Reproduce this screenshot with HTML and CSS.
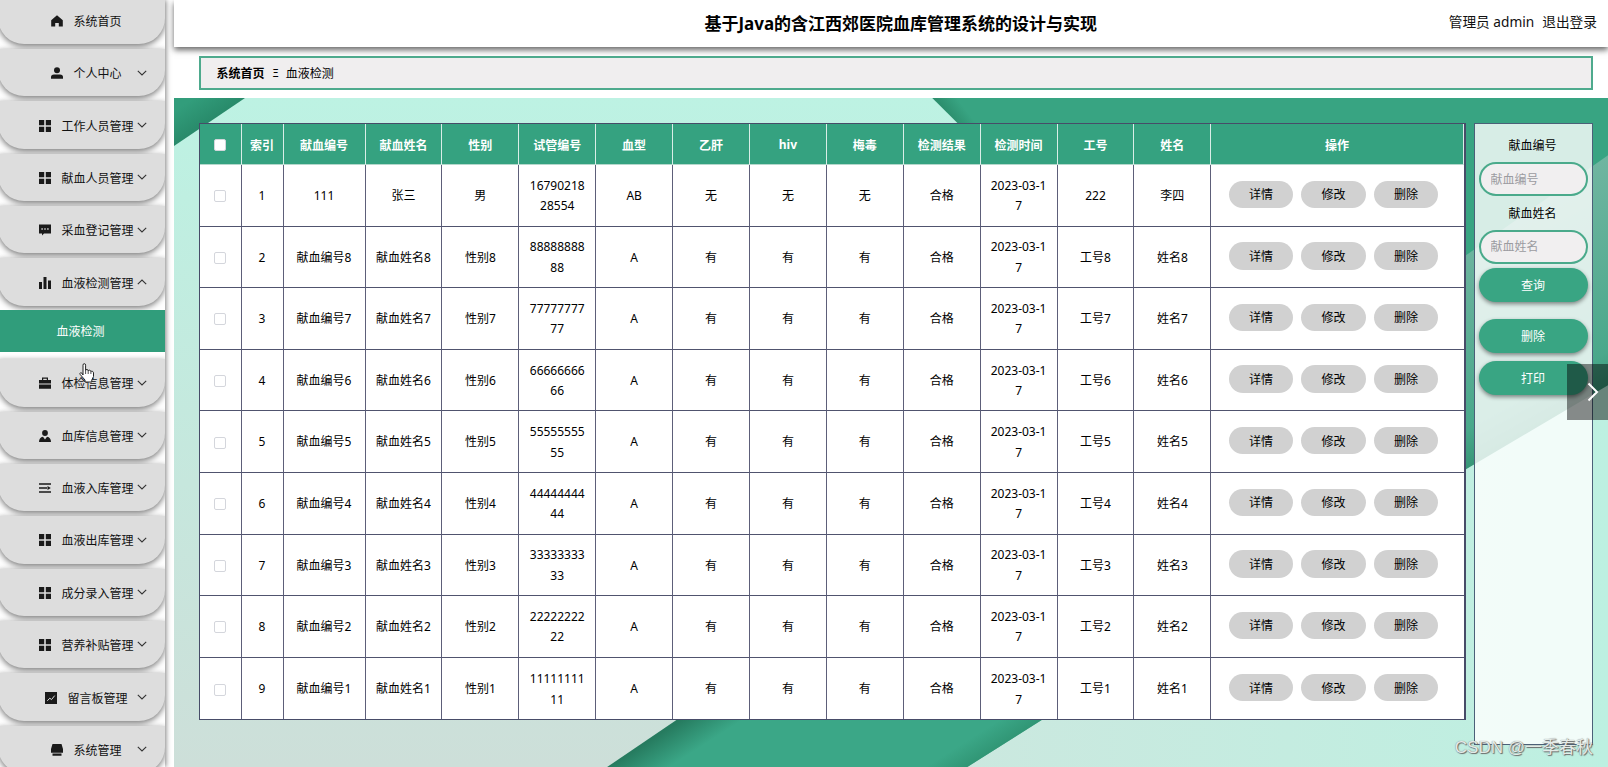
FILE: index.html
```
<!DOCTYPE html>
<html lang="zh-CN">
<head>
    <meta charset="UTF-8">
    <meta name="viewport" content="width=device-width, initial-scale=1.0">
    <title>基于Java的含江西郊医院血库管理系统的设计与实现</title>
    <link rel="stylesheet" href="styles.css">
</head>
<body>

<svg class="symbols" width="0" height="0">
    <symbol id="home" viewBox="0 0 12 12"><path d="M6 .3 11.8 5.200V11.500H7.800V8H4.200V11.500H.2V5.200Z"/></symbol>
    <symbol id="user" viewBox="0 0 12 12"><circle cx="6" cy="3.200" r="3"/><path d="M0 11.800V10Q0 7.400 3 7.400H9Q12 7.400 12 10V11.800Z"/></symbol>
    <symbol id="grid" viewBox="0 0 12 12"><path d="M0 0H5.200V5.200H0ZM6.800 0H12V5.200H6.800ZM0 6.800H5.200V12H0ZM6.800 6.800H12V12H6.800Z"/></symbol>
    <symbol id="chat" viewBox="0 0 12 12"><path fill-rule="evenodd" d="M0 .6H12V9.600H5L3 11.600V9.600H0ZM2.400 4.300V5.700H3.800V4.300ZM5.300 4.300V5.700H6.700V4.300ZM8.200 4.300V5.700H9.600V4.300Z"/></symbol>
    <symbol id="chart" viewBox="0 0 12 12"><path d="M0 5H3V12H0ZM4.500 0H7.500V12H4.500ZM9 3.500H12V12H9Z"/></symbol>
    <symbol id="case" viewBox="0 0 12 12"><path fill-rule="evenodd" d="M3 .5H9V3H12V6.500H0V3H3ZM4.200 1.700V3H7.800V1.700ZM0 7.400H12V11.800H0Z"/></symbol>
    <symbol id="staff" viewBox="0 0 12 12"><circle cx="6" cy="3" r="2.900"/><path d="M0 12Q0 7.500 4 6.800L6 9.500L8 6.800Q12 7.500 12 12Z"/></symbol>
    <symbol id="list" viewBox="0 0 12 12"><path d="M0 1.200H12V2.700H0ZM0 5.200H8V6.700H0ZM0 9.300H12V10.800H0ZM8.500 4 11.800 6 8.500 8Z"/></symbol>
    <symbol id="trend" viewBox="0 0 12 12"><path d="M0 0H12V12H0Z"/><path d="M2.300 8.800 4.800 6.200 6.500 7.600 9.700 3.600" fill="none" stroke="#ddd" stroke-width="1"/></symbol>
    <symbol id="screen" viewBox="0 0 12 12"><path d="M1.500 0H10.500L12 5V8.800H0V5ZM1.500 9.500H10.500V11.800H1.500Z"/></symbol>
    <symbol id="arrow" viewBox="0 0 10 6"><path d="M.8 .8 5 5 9.200 .8" fill="none" stroke="#333" stroke-width="1.100"/></symbol>
</svg>

<div class="app">
    <aside class="sidebar">
        <ul class="menu">
            <li class="menu-item"><svg class="icon"><use href="#home"/></svg><span>系统首页</span></li>
            <li class="menu-item"><svg class="icon"><use href="#user"/></svg><span>个人中心</span><svg class="arrow"><use href="#arrow"/></svg></li>
            <li class="menu-item"><svg class="icon"><use href="#grid"/></svg><span>工作人员管理</span><svg class="arrow"><use href="#arrow"/></svg></li>
            <li class="menu-item"><svg class="icon"><use href="#grid"/></svg><span>献血人员管理</span><svg class="arrow"><use href="#arrow"/></svg></li>
            <li class="menu-item"><svg class="icon"><use href="#chat"/></svg><span>采血登记管理</span><svg class="arrow"><use href="#arrow"/></svg></li>
            <li class="menu-item"><svg class="icon"><use href="#chart"/></svg><span>血液检测管理</span><svg class="arrow up"><use href="#arrow"/></svg></li>
            <li class="submenu-item">血液检测</li>
            <li class="menu-item"><svg class="icon"><use href="#case"/></svg><span>体检信息管理</span><svg class="arrow"><use href="#arrow"/></svg></li>
            <li class="menu-item"><svg class="icon"><use href="#staff"/></svg><span>血库信息管理</span><svg class="arrow"><use href="#arrow"/></svg></li>
            <li class="menu-item"><svg class="icon"><use href="#list"/></svg><span>血液入库管理</span><svg class="arrow"><use href="#arrow"/></svg></li>
            <li class="menu-item"><svg class="icon"><use href="#grid"/></svg><span>血液出库管理</span><svg class="arrow"><use href="#arrow"/></svg></li>
            <li class="menu-item"><svg class="icon"><use href="#grid"/></svg><span>成分录入管理</span><svg class="arrow"><use href="#arrow"/></svg></li>
            <li class="menu-item"><svg class="icon"><use href="#grid"/></svg><span>营养补贴管理</span><svg class="arrow"><use href="#arrow"/></svg></li>
            <li class="menu-item"><svg class="icon"><use href="#trend"/></svg><span>留言板管理</span><svg class="arrow"><use href="#arrow"/></svg></li>
            <li class="menu-item"><svg class="icon"><use href="#screen"/></svg><span>系统管理</span><svg class="arrow"><use href="#arrow"/></svg></li>
        </ul>
    </aside>

    <div class="page">
        <header class="header">
            <h1>基于Java的含江西郊医院血库管理系统的设计与实现</h1>
            <div class="account"><span>管理员 admin</span><span>退出登录</span></div>
        </header>

        <nav class="breadcrumb"><b>系统首页</b><span class="sep">Ξ</span><span>血液检测</span></nav>

        <main class="content">
            <svg class="backdrop" viewBox="0 0 1434 669" preserveAspectRatio="none">
                <defs>
                    <linearGradient id="mint" x1="0" y1="0" x2="0" y2="1"><stop offset="0" stop-color="#bdf2e3"/><stop offset=".15" stop-color="#bfefe1"/><stop offset="1" stop-color="#cddfd9"/></linearGradient>
                    <linearGradient id="mintRight" x1="0" y1="0" x2="1" y2="0"><stop offset="0" stop-color="#cbe8df"/><stop offset="1" stop-color="#bdf0e1"/></linearGradient>
                    <linearGradient id="sheet" gradientUnits="userSpaceOnUse" x1="1340" y1="110" x2="1450" y2="310"><stop offset="0" stop-color="#6fb5a0"/><stop offset=".75" stop-color="#4aa88b"/><stop offset="1" stop-color="#2c8a6b"/></linearGradient>
                    <linearGradient id="corner" gradientUnits="userSpaceOnUse" x1="20" y1="0" x2="36" y2="24"><stop offset="0" stop-color="#329d7b"/><stop offset="1" stop-color="#288a6a"/></linearGradient>
                    <linearGradient id="band" gradientUnits="userSpaceOnUse" x1="471" y1="645" x2="489" y2="673"><stop offset="0" stop-color="#267b5f"/><stop offset="1" stop-color="#3ba787"/></linearGradient>
                    <linearGradient id="bandEnd" gradientUnits="userSpaceOnUse" x1="822" y1="624" x2="836" y2="646"><stop offset="0" stop-color="#2f9372" stop-opacity="0"/><stop offset="1" stop-color="#2f9372"/></linearGradient>
                    <linearGradient id="edge" gradientUnits="userSpaceOnUse" x1="771" y1="12" x2="784" y2="2"><stop offset="0" stop-color="#2c8f6e"/><stop offset="1" stop-color="#38a482"/></linearGradient>
                </defs>
                <path fill="url(#mint)" d="M0 0H1434V669H0Z"/>
                <path fill="url(#corner)" d="M0 0H71L0 48Z"/>
                <path fill="url(#edge)" d="M758 0H1434V300L1200 440Z"/>
                <path fill="url(#sheet)" d="M1434 57V287L1282 377V164Z"/>
                <path fill="url(#mintRight)" d="M1434 287V669H793L880 614 1292 371Z"/>
                <path fill="url(#band)" d="M514 614H880L793 669H433L514 614Z"/>
                <path fill="url(#bandEnd)" d="M840 614H880L793 669H745Z"/>
            </svg>

            <section class="table-box">
                <table class="data-table">
                    <colgroup>
                        <col class="col-narrow"><col class="col-narrow"><col class="col-code">
                        <col><col><col><col><col><col><col><col><col><col><col>
                        <col class="col-actions">
                    </colgroup>
                    <thead>
                        <tr>
                            <th><i class="checkbox"></i></th><th>索引</th><th>献血编号</th><th>献血姓名</th><th>性别</th>
                            <th>试管编号</th><th>血型</th><th>乙肝</th><th>hiv</th><th>梅毒</th><th>检测结果</th>
                            <th>检测时间</th><th>工号</th><th>姓名</th><th>操作</th>
                        </tr>
                    </thead>
                    <tbody id="rows"></tbody>
                </table>
            </section>

            <form class="search">
                <label for="code">献血编号</label>
                <input id="code" type="text" placeholder="献血编号">
                <label for="name">献血姓名</label>
                <input id="name" type="text" placeholder="献血姓名">
                <button type="button" class="btn-query">查询</button>
                <button type="button" class="btn-delete">删除</button>
                <button type="button" class="btn-print">打印</button>
            </form>
        </main>
    </div>
</div>

<div class="next"><svg width="12" height="20" viewBox="0 0 12 20"><path d="M1.500 1.500 10 10 1.500 18.500" fill="none" stroke="#fff" stroke-width="2"/></svg></div>

<svg class="cursor" width="16" height="20" viewBox="0 0 16 20"><path d="M4 12V2.200Q4 .7 5.300 .7T6.600 2.200V7.500Q6.800 6.400 8 6.500T9.200 7.900Q9.600 7 10.700 7.200T11.900 8.700Q12.300 8 13.300 8.300T14.500 9.800V13.500L12.800 17V19H6V17L1.200 11.500Q.5 10.200 1.600 9.700T4 12Z" fill="#fff" stroke="#222" stroke-width="1"/><path d="M6.600 7.500V11M9.200 8V11M11.900 8.700V11" stroke="#222" stroke-width=".8"/></svg>

<div class="watermark">CSDN @一季春秋</div>

<script>
    const records = [
        ['111', '张三', '男', '1679021828554', 'AB', '无', '无', '无', '合格', '2023-03-17', '222', '李四']
    ];

    for (let n = 8; n >= 1; n--) {
        records.push(['献血编号' + n, '献血姓名' + n, '性别' + n, String(n).repeat(10), 'A', '有', '有', '有', '合格', '2023-03-17', '工号' + n, '姓名' + n]);
    }

    document.getElementById('rows').innerHTML = records.map((record, i) => `
        <tr>
            <td><i class="checkbox"></i></td>
            <td>${i + 1}</td>
            ${record.map(value => `<td>${value}</td>`).join('')}
            <td><div class="actions"><button>详情</button><button>修改</button><button>删除</button></div></td>
        </tr>
    `).join('');
</script>

</body>
</html>
```
FILE: styles.css
```
* {
    box-sizing: border-box;
}

body {
    margin: 0;
    height: 767px;
    overflow: hidden;
    position: relative;
    font-family: "Noto Sans", "Noto Sans CJK SC", sans-serif;
    font-size: 12px;
    color: #111;
    background: #fff;
}

.symbols {
    position: absolute;
}

.app {
    display: flex;
    height: 767px;
}

/* sidebar */
.sidebar {
    width: 165px;
    flex: none;
    margin-right: 8.500px;
    box-shadow: 1px 0 5px rgba(0, 0, 0, 0.5);
    overflow: hidden;
}

.menu {
    list-style: none;
    margin: -3.300px 0 0 -2px;
    padding: 0;
}

.menu-item {
    position: relative;
    display: flex;
    align-items: center;
    justify-content: center;
    gap: 10px;
    height: 47.350px;
    margin-bottom: 5px;
    padding: 1px 0 0 10px;
    background: #ddd;
    border-radius: 0 0 26px 26px;
    box-shadow: 0 2px 6px rgba(0, 0, 0, 0.55);
}

.icon {
    width: 12px;
    height: 12px;
    fill: #1a1a1a;
}

.arrow {
    position: absolute;
    right: 18px;
    top: 20.500px;
    width: 10px;
    height: 6px;
}

.arrow.up {
    transform: rotate(180deg);
}

.submenu-item {
    position: relative;
    height: 42px;
    margin: -1px 0 7.500px;
    padding-right: 2px;
    line-height: 43px;
    text-align: center;
    color: #fff;
    background: #309d7b;
}

/* header */
.page {
    flex: 1;
    display: flex;
    flex-direction: column;
}

.header {
    position: relative;
    display: flex;
    align-items: center;
    justify-content: center;
    height: 47px;
    flex: none;
    background: #fff;
    box-shadow: 0 3px 6px rgba(0, 0, 0, 0.6);
}

.header h1 {
    margin: 0 0 3px 20px;
    font-size: 17px;
    font-weight: bold;
    color: #000;
}

.account {
    position: absolute;
    right: 11px;
    top: 12px;
    display: flex;
    gap: 8px;
    font-size: 13.700px;
    line-height: 20px;
}

.breadcrumb {
    position: relative;
    display: flex;
    align-items: center;
    height: 34px;
    flex: none;
    margin: 9px 15px 8px 25px;
    padding: 0 0 1px 16px;
    background: #f0eeef;
    border: 2px solid #4eaa8d;
    color: #000;
}

.sep {
    margin: 0 7px 0 8px;
    font-size: 10px;
}

/* content */
.content {
    position: relative;
    flex: 1;
    display: flex;
    align-items: flex-start;
    gap: 8px;
    padding: 25px 15px 0 25px;
}

.backdrop {
    position: absolute;
    left: 0;
    top: 0;
    width: 100%;
    height: 100%;
}

.table-box {
    position: relative;
    width: 1267px;
    height: 597px;
    border: 1px solid #474c68;
    border-right-width: 2px;
    background: #fff;
}

.data-table {
    width: 1264px;
    table-layout: fixed;
    border-collapse: separate;
    border-spacing: 0;
    text-align: center;
}

.data-table col {
    width: 76.900px;
}

.data-table .col-narrow {
    width: 42px;
}

.data-table .col-code {
    width: 82px;
}

.data-table .col-actions {
    width: 252px;
}

th {
    height: 41px;
    padding: 1px 0 0;
    color: #fff;
    background: #35a280;
    border-right: 1px solid #d9eee7;
    border-bottom: 1px solid #b5d8cc;
}

td {
    height: 61.600px;
    padding: 2px 8px 0;
    line-height: 20.500px;
    word-break: break-all;
    color: #000;
    border-right: 1px solid #5d5f79;
    border-bottom: 1px solid #50536e;
}

td:first-child,
td:nth-child(3),
td:nth-child(4) {
    padding: 2px 0 0;
}

td:last-child {
    padding: 2px 0 0;
    border-right: 0;
}

tr:last-child td {
    border-bottom: 0;
}

.checkbox {
    display: block;
    width: 12px;
    height: 12px;
    margin: 0 auto;
    background: #fff;
    border: 1px solid #d4d6dc;
    border-radius: 2px;
}

.actions {
    display: flex;
    gap: 8px;
    padding: 0 0 4px 17.500px;
}

.actions button {
    width: 64.500px;
    height: 27.500px;
    padding: 0;
    border: 0;
    border-radius: 14px;
    background: #d1d1d1;
    color: #000;
    font: 12px "Noto Sans", "Noto Sans CJK SC", sans-serif;
}

/* search panel */
.search {
    position: relative;
    display: flex;
    flex-direction: column;
    width: 119px;
    height: 622px;
    padding: 13px 5px 0 4px;
    border: 1px solid #4b6078;
    background: rgba(255, 255, 255, 0.8);
}

.search label {
    height: 18px;
    line-height: 18px;
    text-align: center;
    color: #000;
}

.search input {
    width: 109px;
    height: 34px;
    margin: 7px 0 8.500px;
    padding: 0 10px;
    border: 2px solid #4aaa8b;
    border-radius: 17px;
    background: #f1eff0;
    font: 12px "Noto Sans", "Noto Sans CJK SC", sans-serif;
}

.search input::placeholder {
    color: #9b9ba0;
}

.search button {
    width: 109px;
    height: 34px;
    flex: none;
    padding: 0;
    border: 0;
    border-radius: 17px;
    background: #39a583;
    color: #fff;
    font: 12px "Noto Sans", "Noto Sans CJK SC", sans-serif;
    box-shadow: 0 2px 4px rgba(0, 0, 0, 0.45);
}

.search .btn-query {
    margin: -4px 0 17px;
}

.search .btn-print {
    margin-top: 8px;
}

/* floating pieces */
.next {
    position: absolute;
    left: 1567px;
    top: 364px;
    width: 41px;
    height: 56px;
    padding: 18px 0 0 20px;
    background: rgba(0, 0, 0, 0.45);
}

.cursor {
    position: absolute;
    left: 79px;
    top: 363px;
}

.watermark {
    position: absolute;
    right: 15px;
    top: 736px;
    font: 17px/24px "Liberation Sans", "Noto Sans CJK SC", sans-serif;
    color: #e4eae7;
    text-shadow: 1px 1px 1px #666, 0 0 1px #777;
}
```
